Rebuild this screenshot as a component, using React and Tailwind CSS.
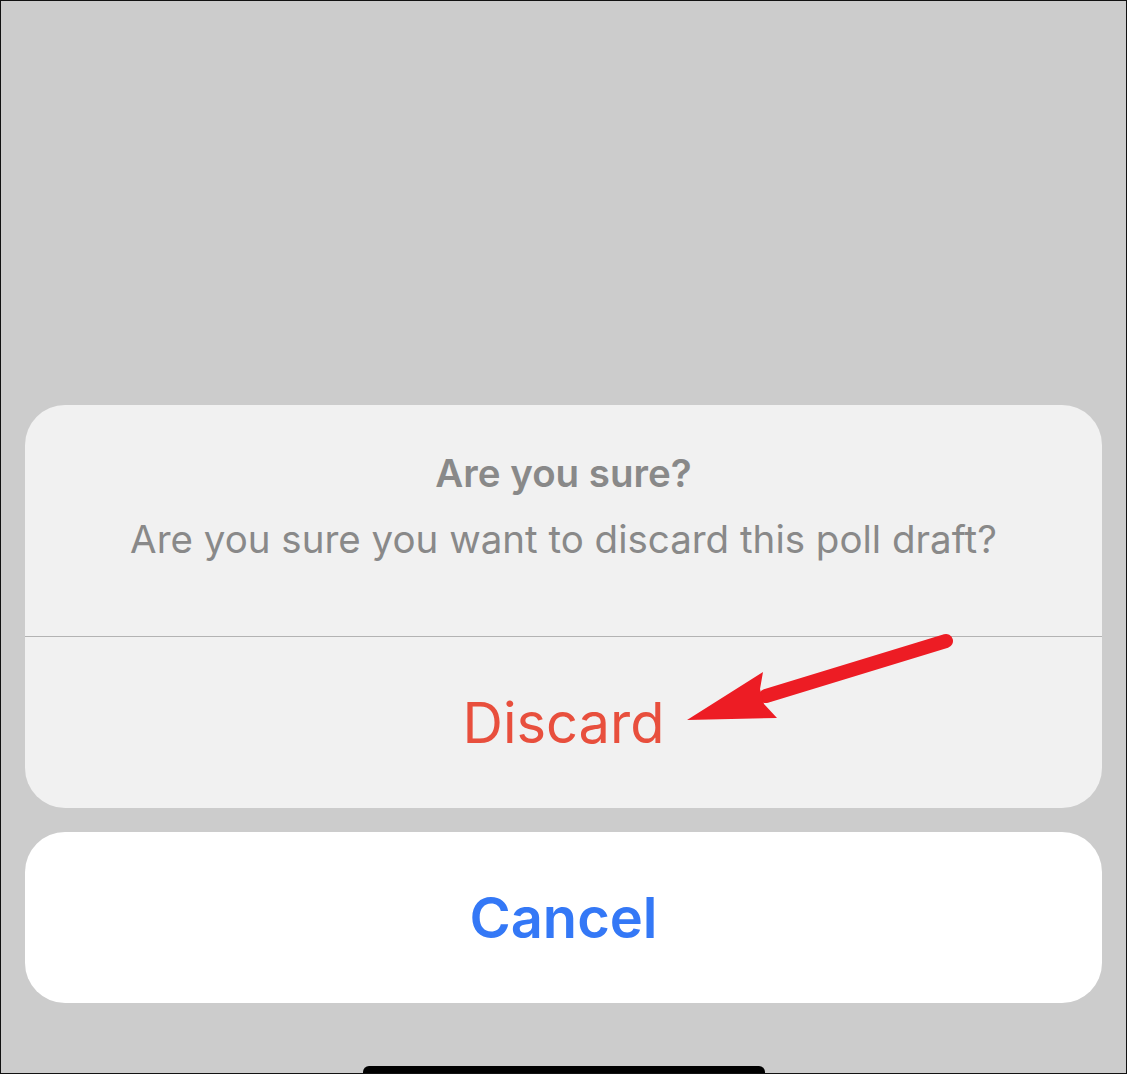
import React from 'react';

const font = { fontFamily: 'Inter, "Noto Sans", sans-serif' };

function Arrow() {
  return (
    <svg className="absolute left-0 top-0 pointer-events-none" width="1127" height="1074" viewBox="0 0 1127 1074">
      <line x1="945" y1="640" x2="765" y2="695" stroke="#ed1c24" strokeWidth="14" strokeLinecap="round" />
      <polygon points="686,719 762,671 759,688 763,703 776,717" fill="#ed1c24" />
    </svg>
  );
}

export default function App() {
  return (
    <div
      className="relative flex h-[1074px] w-[1127px] flex-col justify-end overflow-hidden border border-[#111] bg-[#cccccc] px-6"
      style={font}
    >
      <div className="flex h-[403px] flex-col rounded-[40px] bg-[#f1f1f1]">
        <div className="flex h-[231px] flex-col items-center pt-[46px]">
          <h2 className="text-[38.5px] font-semibold leading-[44px] text-[#898989]">Are you sure?</h2>
          <p className="mt-[22px] text-[38.5px] leading-[44px] text-[#898989]">
            Are you sure you want to discard this poll draft?
          </p>
        </div>
        <div className="h-px bg-[#b3b3b3]" />
        <button className="flex flex-1 items-center justify-center text-[56px] leading-none text-[#e84f3d]">
          Discard
        </button>
      </div>
      <button className="mt-6 flex h-[171px] items-center justify-center rounded-[40px] bg-white text-[56px] font-semibold leading-none text-[#3478f6]">
        Cancel
      </button>
      <div className="flex h-[70px] items-end justify-center">
        <div className="h-[7px] w-[402px] rounded-t-[6px] bg-black" />
      </div>
      <Arrow />
    </div>
  );
}
